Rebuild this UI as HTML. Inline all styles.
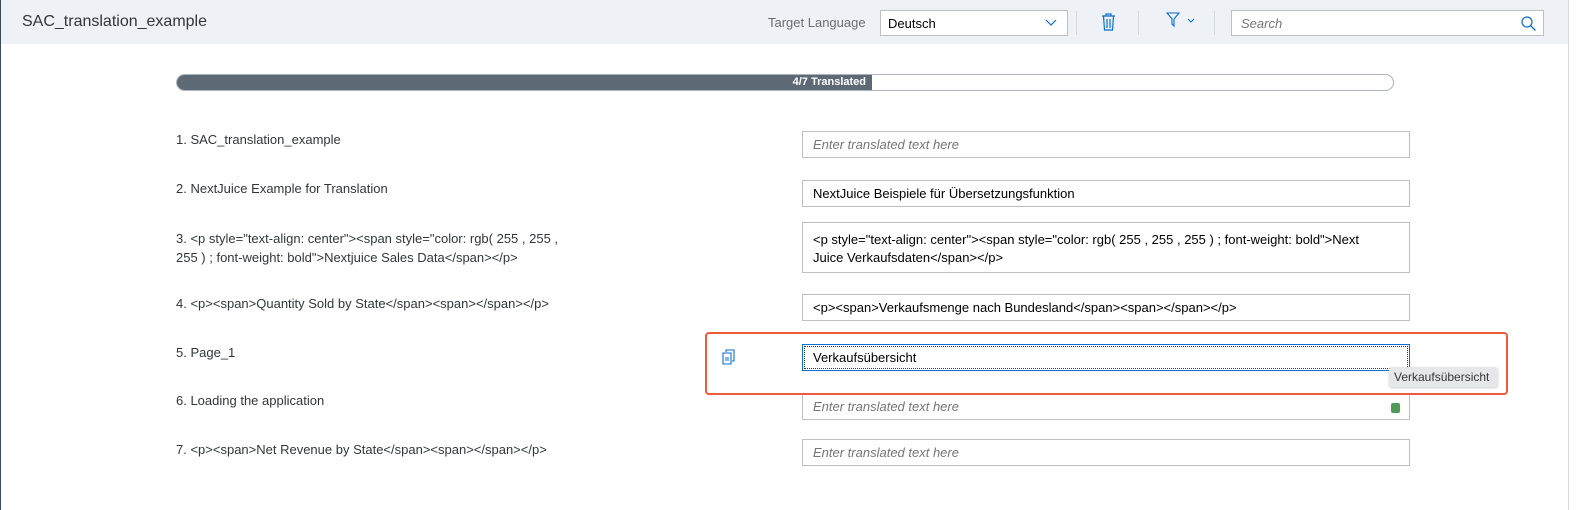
<!DOCTYPE html>
<html><head><meta charset="utf-8"><style>
*{box-sizing:border-box;margin:0;padding:0}
body{width:1581px;height:510px;background:#fff;font-family:"Liberation Sans",sans-serif;font-size:13px;color:#32363a;position:relative;overflow:hidden;border-left:1px solid #3b4a5a}
.hdr{position:absolute;left:0;top:0;width:1568px;height:44px;background:#eef2f6;}
.title{position:absolute;left:21px;top:13px;font-size:16px;color:#32363a}
.ab{position:absolute}
.inp{position:absolute;left:801px;width:608px;border:1px solid #bfbfbf;background:#fff;padding:5px 10px;font-size:13px;line-height:16px;color:#000}
.ph{font-style:italic;color:#757575}
.lbl{position:absolute;left:175px;font-size:13px;line-height:17px;color:#32363a;width:410px}
.sep{position:absolute;top:11px;width:1px;height:24px;background:#d5dadd}
</style></head><body>
<div class="hdr">
<div class="title">SAC_translation_example</div>
<div class="ab" style="left:767px;top:15px;color:#6a6d70;font-size:13px">Target Language</div>
<div class="ab" style="left:879px;top:10px;width:188px;height:26px;background:#fff;border:1px solid #bfbfbf;padding:5px 7px;color:#000">Deutsch
<svg class="ab" style="right:10px;top:8px" width="12" height="8" viewBox="0 0 12 8"><path d="M1 1l5 5 5-5" fill="none" stroke="#0a6ed1" stroke-width="1.2"/></svg></div>
<div class="sep" style="left:1075px"></div>
<svg class="ab" style="left:1100px;top:13px" width="15" height="18" viewBox="0 0 15 18"><path d="M1 3h13M5 3V1h5v2M2.5 3l1 14h8l1-14M6 6v9M9 6v9" fill="none" stroke="#0a6ed1" stroke-width="1.2"/></svg>
<div class="sep" style="left:1137px"></div>
<svg class="ab" style="left:1165px;top:12px" width="30" height="16" viewBox="0 0 30 16"><path d="M1 1h12l-5 6v7l-2-2V7z" fill="none" stroke="#0a6ed1" stroke-width="1.1"/><path d="M22 7l3 3 3-3" fill="none" stroke="#0a6ed1" stroke-width="1"/></svg>
<div class="sep" style="left:1213px"></div>
<div class="ab" style="left:1230px;top:10px;width:313px;height:26px;background:#fff;border:1px solid #bfbfbf;padding:5px 9px;color:#757575;font-style:italic">Search
<svg class="ab" style="right:7px;top:5px" width="15" height="15" viewBox="0 0 15 15"><circle cx="6" cy="6" r="5" fill="none" stroke="#0a6ed1" stroke-width="1.2"/><path d="M9.5 9.5l5 5" stroke="#0a6ed1" stroke-width="1.3"/></svg></div>
</div>
<div class="ab" style="left:1567px;top:0;width:1px;height:510px;background:#d9d9d9"></div>
<div class="ab" style="left:175px;top:74px;width:1218px;height:17px;border:1px solid #a9b4be;border-radius:9px;overflow:hidden;background:#fff">
<div style="width:695px;height:100%;background:#5d6a75;color:#fff;font-size:11px;font-weight:bold;text-align:right;padding-right:6px;line-height:15px">4/7 Translated</div></div>

<div class="lbl" style="top:131px">1. SAC_translation_example</div>
<div class="lbl" style="top:180px">2. NextJuice Example for Translation</div>
<div class="lbl" style="top:229px;line-height:19px">3. &lt;p style="text-align: center"&gt;&lt;span style="color: rgb( 255 , 255 ,<br>255 ) ; font-weight: bold"&gt;Nextjuice Sales Data&lt;/span&gt;&lt;/p&gt;</div>
<div class="lbl" style="top:295px">4. &lt;p&gt;&lt;span&gt;Quantity Sold by State&lt;/span&gt;&lt;span&gt;&lt;/span&gt;&lt;/p&gt;</div>
<div class="lbl" style="top:344px">5. Page_1</div>
<div class="lbl" style="top:392px">6. Loading the application</div>
<div class="lbl" style="top:441px">7. &lt;p&gt;&lt;span&gt;Net Revenue by State&lt;/span&gt;&lt;span&gt;&lt;/span&gt;&lt;/p&gt;</div>

<div class="inp ph" style="top:131px;height:27px">Enter translated text here</div>
<div class="inp" style="top:180px;height:27px">NextJuice Beispiele für Übersetzungsfunktion</div>
<div class="inp" style="top:222px;height:51px;padding-top:8px;line-height:18px">&lt;p style="text-align: center"&gt;&lt;span style="color: rgb( 255 , 255 , 255 ) ; font-weight: bold"&gt;Next<br>Juice Verkaufsdaten&lt;/span&gt;&lt;/p&gt;</div>
<div class="inp" style="top:294px;height:27px">&lt;p&gt;&lt;span&gt;Verkaufsmenge nach Bundesland&lt;/span&gt;&lt;span&gt;&lt;/span&gt;&lt;/p&gt;</div>
<div class="inp" style="top:344px;height:27px;border-color:#0a6ed1;outline:1px dotted #333;outline-offset:-3px">Verkaufsübersicht</div>
<div class="inp ph" style="top:393px;height:27px">Enter translated text here<div class="ab" style="right:9px;top:9px;width:9px;height:10px;background:#4f9a5a;border-radius:2px"></div></div>
<div class="inp ph" style="top:439px;height:27px">Enter translated text here</div>

<div class="ab" style="left:704px;top:332px;width:803px;height:63px;border:2px solid #ee5a3c;border-radius:4px"></div>
<svg class="ab" style="left:721px;top:349px" width="14" height="16" viewBox="0 0 14 16"><path d="M4 3V1h8v11h-2M1 4h8v11H1zM3 9h4M3 11h4" fill="none" stroke="#0a6ed1" stroke-width="1.1"/></svg>
<div class="ab" style="left:1388px;top:367px;width:109px;height:20px;background:#e6e7ea;border-radius:3px;font-size:12px;color:#32363a;padding:3px 5px;box-shadow:0 1px 2px rgba(0,0,0,.2)">Verkaufsübersicht</div>
</body></html>
